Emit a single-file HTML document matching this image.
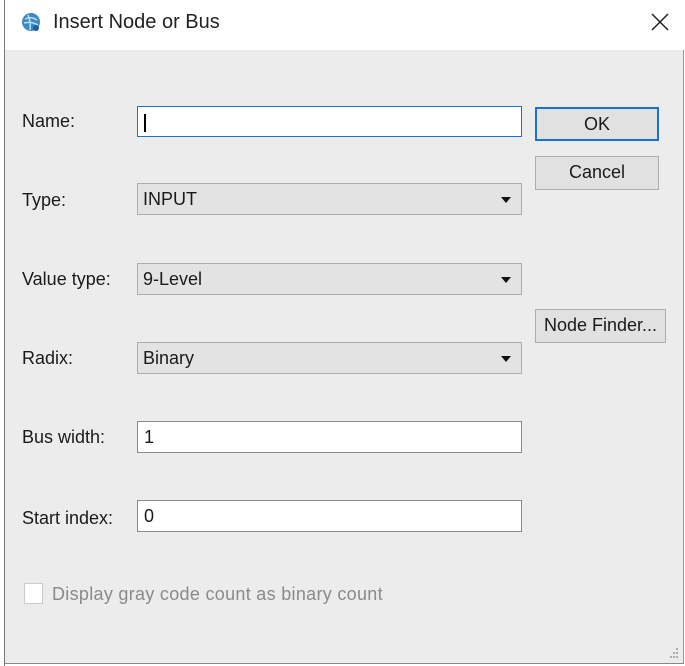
<!DOCTYPE html>
<html><head><style>
body{margin:0;width:685px;height:666px;position:relative;overflow:hidden;background:#fff;font-family:"Liberation Sans",sans-serif;font-size:18px;color:#1a1a1a}
.abs{position:absolute}
.body{left:4px;top:50px;width:678px;height:613px;background:#ececec;border-left:1px solid #777;border-right:1px solid #999;border-bottom:1px solid #888}
.lbl{left:22px}
.inp{left:137px;width:385px;height:31px;background:#fff;border:1px solid #8a8a8a;box-sizing:border-box;padding:5px 6px;font-size:18px}
.cmb{left:137px;width:385px;height:32px;background:#e3e3e3;border:1px solid #adadad;box-sizing:border-box;padding:5px 5px}
.cmb:after{content:"";position:absolute;right:10px;top:13px;border-left:5px solid transparent;border-right:5px solid transparent;border-top:6px solid #111}
.btn{background:#e1e1e1;border:1px solid #adadad;box-sizing:border-box;text-align:center;line-height:31px}
</style></head><body>
<div class="abs" style="left:0;top:0;width:4px;height:666px;background:#fff;border-right:1px solid #777"></div>
<svg class="abs" style="left:20px;top:11px" width="22" height="22" viewBox="0 0 22 22"><circle cx="11" cy="11" r="9" fill="#3a8ac8"/><path d="M5 8q6-3 12 1M4 12q7-2 14 2M8 4q3 7 2 15" stroke="#bfe0f5" stroke-width="1.5" fill="none"/><circle cx="16" cy="17" r="3" fill="#1d5e9a"/></svg>
<div class="abs" style="left:53px;top:11px;font-size:20px;color:#222">Insert Node or Bus</div>
<svg class="abs" style="left:651px;top:13px" width="18" height="18"><path d="M1 1L17 17M17 1L1 17" stroke="#222" stroke-width="1.5"/></svg>
<div class="abs body"></div>
<div class="abs lbl" style="top:111px">Name:</div>
<div class="abs inp" style="top:106px;border:1px solid #1a73c8"><span style="display:inline-block;width:2px;height:18px;background:#000;vertical-align:middle"></span></div>
<div class="abs lbl" style="top:190px">Type:</div>
<div class="abs cmb" style="top:183px">INPUT</div>
<div class="abs lbl" style="top:269px">Value type:</div>
<div class="abs cmb" style="top:263px">9-Level</div>
<div class="abs lbl" style="top:348px">Radix:</div>
<div class="abs cmb" style="top:342px">Binary</div>
<div class="abs lbl" style="top:427px">Bus width:</div>
<div class="abs inp" style="top:421px;height:32px">1</div>
<div class="abs lbl" style="top:508px">Start index:</div>
<div class="abs inp" style="top:500px;height:32px">0</div>
<div class="abs btn" style="left:535px;top:107px;width:124px;height:34px;border:2px solid #1a73c8;line-height:30px">OK</div>
<div class="abs btn" style="left:535px;top:156px;width:124px;height:34px">Cancel</div>
<div class="abs btn" style="left:535px;top:309px;width:131px;height:34px">Node Finder...</div>
<div class="abs" style="left:24px;top:583px;width:19px;height:21px;background:#fff;border:1px solid #ccc;box-sizing:border-box"></div>
<div class="abs" style="left:52px;top:584px;color:#8a8a8a;letter-spacing:0.3px">Display gray code count as binary count</div>
<svg class="abs" style="left:670px;top:648px" width="10" height="12"><g fill="#aaa"><rect x="6" y="0" width="2" height="2"/><rect x="6" y="4" width="2" height="2"/><rect x="3" y="4" width="2" height="2"/><rect x="6" y="8" width="2" height="2"/><rect x="3" y="8" width="2" height="2"/><rect x="0" y="8" width="2" height="2"/></g></svg>
</body></html>
